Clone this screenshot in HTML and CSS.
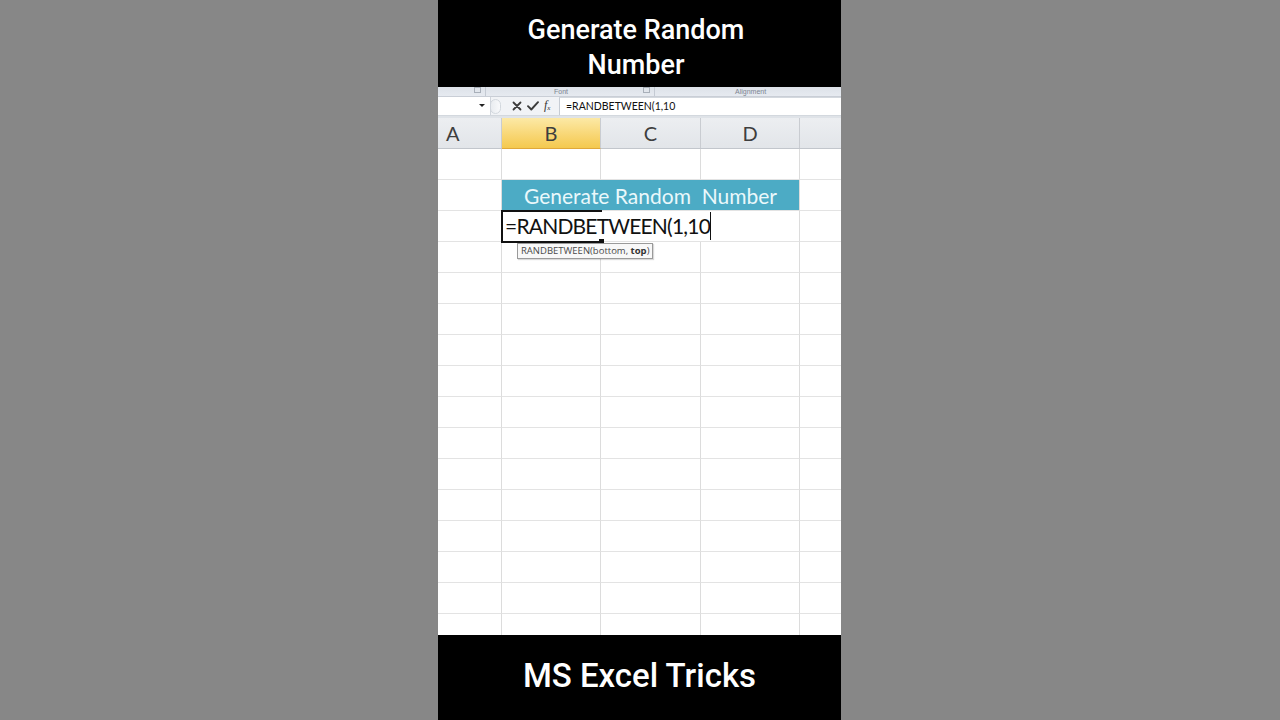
FILE: index.html
```html
<!DOCTYPE html>
<html>
<head>
<meta charset="utf-8">
<link rel="stylesheet" href="styles.css">
</head>
<body>
<div class="frame">
  <header class="top">
    <h1 class="title">Generate Random<br>Number</h1>
  </header>
  <div class="ribbon">
    <span class="launcher l1"></span>
    <span class="sep"></span>
    <span class="grp font">Font</span>
    <span class="launcher l2"></span>
    <span class="sep"></span>
    <span class="grp align">Alignment</span>
  </div>
  <div class="fbar">
    <div class="namebox"><span class="dd"></span></div>
    <div class="grip"><span></span></div>
    <div class="tools">
      <svg class="ico" width="10" height="10" viewBox="0 0 10 10"><path d="M1.5 1.5 L8.5 8.5 M8.5 1.5 L1.5 8.5" stroke="#3c3c3c" stroke-width="1.8" stroke-linecap="round"/></svg>
      <svg class="ico" width="12" height="10" viewBox="0 0 12 10"><path d="M1 5.2 L4.3 8.5 L11 1.2" stroke="#3c3c3c" stroke-width="1.9" fill="none" stroke-linecap="round" stroke-linejoin="round"/></svg>
      <span class="fx">f<sub>x</sub></span>
    </div>
    <div class="input">=RANDBETWEEN(1,10</div>
  </div>
  <div class="gap"></div>
  <div class="sheet">
    <div class="colhead">
      <div class="ch cha">A</div>
      <div class="ch sel">B</div>
      <div class="ch">C</div>
      <div class="ch">D</div>
      <div class="ch last"></div>
    </div>
    <div class="grid">
      <div class="c"></div><div class="c"></div><div class="c"></div><div class="c"></div><div class="c last"></div>
      <div class="c"></div><div class="band">Generate Random&nbsp; Number</div><div class="c last"></div>
      <div class="c"></div>
      <div class="edit"><span class="etext">=RANDBETWEEN(1,10</span><span class="handle"></span>
        <div class="tip">RANDBETWEEN(bottom, <b>top</b>)</div>
      </div>
      <div class="c last"></div>
      <div class="c"></div><div class="c"></div><div class="c"></div><div class="c"></div><div class="c last"></div>
      <div class="c"></div><div class="c"></div><div class="c"></div><div class="c"></div><div class="c last"></div>
      <div class="c"></div><div class="c"></div><div class="c"></div><div class="c"></div><div class="c last"></div>
      <div class="c"></div><div class="c"></div><div class="c"></div><div class="c"></div><div class="c last"></div>
      <div class="c"></div><div class="c"></div><div class="c"></div><div class="c"></div><div class="c last"></div>
      <div class="c"></div><div class="c"></div><div class="c"></div><div class="c"></div><div class="c last"></div>
      <div class="c"></div><div class="c"></div><div class="c"></div><div class="c"></div><div class="c last"></div>
      <div class="c"></div><div class="c"></div><div class="c"></div><div class="c"></div><div class="c last"></div>
      <div class="c"></div><div class="c"></div><div class="c"></div><div class="c"></div><div class="c last"></div>
      <div class="c"></div><div class="c"></div><div class="c"></div><div class="c"></div><div class="c last"></div>
      <div class="c"></div><div class="c"></div><div class="c"></div><div class="c"></div><div class="c last"></div>
      <div class="c"></div><div class="c"></div><div class="c"></div><div class="c"></div><div class="c last"></div>
      <div class="c"></div><div class="c"></div><div class="c"></div><div class="c"></div><div class="c last"></div>
    </div>
  </div>
  <footer class="bottom">MS Excel Tricks</footer>
</div>
</body>
</html>
```

FILE: styles.css
```css
html, body {
  margin: 0;
  padding: 0;
  height: 720px;
  overflow: hidden;
}
body {
  background: #878787;
  font-family: "Lato", "Liberation Sans", sans-serif;
}
.frame {
  margin-left: 438px;
  width: 403px;
  height: 720px;
  display: flex;
  flex-direction: column;
  background: #fff;
}
.top {
  height: 87px;
  background: #000;
  display: flex;
  align-items: center;
  justify-content: center;
  flex: none;
}
.title {
  margin: 0;
  padding-top: 8px;
  padding-right: 7px;
  color: #fff;
  font-family: "Roboto", sans-serif;
  font-weight: 500;
  font-size: 27px;
  line-height: 35px;
  text-align: center;
}
.ribbon {
  height: 10px;
  flex: none;
  background: linear-gradient(#dde2e9, #e6eaf0);
  border-bottom: 1px solid #c9ced6;
  box-sizing: border-box;
  display: flex;
  align-items: flex-start;
  position: relative;
  font-family: "Liberation Sans", sans-serif;
  font-size: 7px;
  color: #7d8592;
}
.ribbon .grp {
  line-height: 9px;
}
.ribbon .font { margin-left: 68px; }
.ribbon .align { margin-left: 80px; }
.ribbon .launcher {
  width: 5px;
  height: 4px;
  border: 1px solid #a8afb9;
  margin-left: 36px;
  margin-top: 0;
}
.ribbon .l2 { margin-left: 75px; }
.ribbon .sep {
  width: 1px;
  height: 9px;
  background: #c4cad3;
  margin-left: 4px;
}
.fbar {
  height: 19px;
  flex: none;
  display: flex;
  align-items: stretch;
  background: #f1f3f6;
  border-bottom: 1px solid #d3d8de;
  box-sizing: border-box;
}
.namebox {
  width: 52px;
  background: #fff;
  position: relative;
  border-right: 1px solid #d0d5dc;
}
.dd {
  position: absolute;
  right: 5px;
  top: 7px;
  border-left: 3px solid transparent;
  border-right: 3px solid transparent;
  border-top: 3px solid #222;
}
.grip {
  width: 10px;
  display: flex;
  align-items: center;
}
.grip span {
  width: 13px;
  height: 15px;
  border-radius: 8px;
  background: linear-gradient(90deg, #e9ecf0, #f8f9fb);
  border: 1px solid #d3d8de;
  box-sizing: border-box;
  margin-left: -1px;
}
.tools {
  width: 58px;
  display: flex;
  align-items: center;
  gap: 5px;
  padding-left: 11px;
  box-sizing: border-box;
}
.fx {
  font-family: "Liberation Serif", serif;
  font-style: italic;
  font-size: 12px;
  color: #333;
  line-height: 12px;
  margin-left: 0;
}
.fx sub {
  font-size: 7px;
  vertical-align: -1px;
}
.input {
  flex: 1;
  background: #fff;
  border-left: 1px solid #c6ccd4;
  border-top: 1px solid #d3d8de;
  padding-left: 6px;
  font-family: "Lato", sans-serif;
  font-size: 10.5px;
  line-height: 17px;
  color: #111;
}
.gap {
  height: 2px;
  flex: none;
  background: #dfe3e8;
}
.sheet {
  flex: 1;
  overflow: hidden;
  position: relative;
}
.colhead {
  display: grid;
  grid-template-columns: 64px 99px 100px 99px 1fr;
  height: 31px;
  border-bottom: 1px solid #c2c6cc;
  box-sizing: border-box;
  background: linear-gradient(#eceef1, #e2e5e9);
}
.ch {
  border-right: 1px solid #c9ccd1;
  text-align: center;
  font-size: 20px;
  line-height: 30px;
  color: #3e3e3e;
}
.ch.cha {
  text-align: left;
  padding-left: 8px;
}
.ch.sel {
  background: linear-gradient(#fce9a6, #f8d571 60%, #f4c94f);
  border-bottom: 1px solid #e0a83a;
  margin-bottom: -1px;
}
.ch.last { border-right: none; }
.grid {
  display: grid;
  grid-template-columns: 64px 99px 100px 99px 1fr;
  grid-auto-rows: 31px;
}
.c {
  border-right: 1px solid #dcdcdc;
  border-bottom: 1px solid #e3e3e3;
  box-sizing: border-box;
}
.c.last { border-right: none; }
.band {
  grid-column: 2 / span 3;
  background: #4cabc5;
  color: #eaf8fb;
  font-size: 21px;
  line-height: 31px;
  text-align: center;
  border-right: 1px solid #dcdcdc;
  border-bottom: 1px solid #e3e3e3;
  box-sizing: border-box;
}
.edit {
  grid-column: 2 / span 3;
  position: relative;
  border-right: 1px solid #dcdcdc;
  border-bottom: 1px solid #e3e3e3;
  box-sizing: border-box;
  white-space: nowrap;
}
.edit::before {
  content: "";
  position: absolute;
  left: -1px;
  top: -1px;
  width: 101px;
  height: 33px;
  border: 2px solid #111;
  border-right: none;
  box-sizing: border-box;
}
.etext {
  position: relative;
  display: inline-block;
  padding-left: 3px;
  font-size: 21px;
  letter-spacing: -0.8px;
  color: #111;
  border-right: 1px solid #111;
  height: 28px;
  margin-top: 1px;
  line-height: 28px;
}
.handle {
  position: absolute;
  left: 97px;
  top: 28px;
  width: 5px;
  height: 5px;
  background: #111;
}
.tip {
  position: absolute;
  left: 15px;
  top: 32px;
  height: 14px;
  padding: 0 3px;
  border: 1px solid #9a9a9a;
  background: #f8f8f8;
  box-shadow: 1px 1px 1px rgba(0,0,0,0.15);
  font-family: "Open Sans", sans-serif;
  font-size: 9.5px;
  line-height: 13px;
  color: #4a4a4a;
  z-index: 2;
}
.tip b { color: #333; }
.bottom {
  height: 85px;
  flex: none;
  background: #000;
  color: #fff;
  font-family: "Roboto", sans-serif;
  font-weight: 500;
  font-size: 33px;
  line-height: 82px;
  text-align: center;
  box-sizing: border-box;
}
```
